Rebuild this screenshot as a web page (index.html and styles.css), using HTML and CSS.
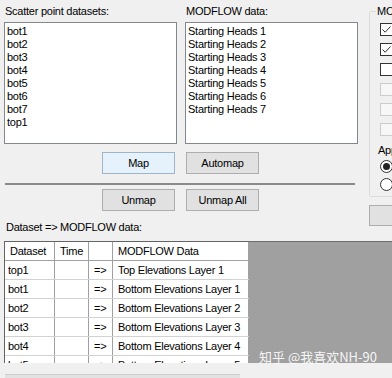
FILE: index.html
```html
<!DOCTYPE html>
<html>
<head>
<meta charset="utf-8">
<link rel="stylesheet" href="styles.css">
</head>
<body>
<div class="win">
  <div class="top">
    <div class="left">
      <div class="lists">
        <div class="col">
          <div class="lbl">Scatter point datasets:</div>
          <div class="listbox">
            <div class="item">bot1</div>
            <div class="item">bot2</div>
            <div class="item">bot3</div>
            <div class="item">bot4</div>
            <div class="item">bot5</div>
            <div class="item">bot6</div>
            <div class="item">bot7</div>
            <div class="item">top1</div>
          </div>
        </div>
        <div class="col">
          <div class="lbl">MODFLOW data:</div>
          <div class="listbox">
            <div class="item">Starting Heads 1</div>
            <div class="item">Starting Heads 2</div>
            <div class="item">Starting Heads 3</div>
            <div class="item">Starting Heads 4</div>
            <div class="item">Starting Heads 5</div>
            <div class="item">Starting Heads 6</div>
            <div class="item">Starting Heads 7</div>
          </div>
        </div>
      </div>
      <div class="btnrow first">
        <button class="btn focus">Map</button>
        <button class="btn">Automap</button>
      </div>
      <div class="sep"></div>
      <div class="btnrow">
        <button class="btn">Unmap</button>
        <button class="btn">Unmap All</button>
      </div>
      <div class="lbl maplbl">Dataset =&gt; MODFLOW data:</div>
    </div>
    <div class="right">
      <div class="group">
        <div class="glabel">MODFLOW options</div>
        <div class="cb on"><svg viewBox="0 0 13 13" width="13" height="13"><path d="M2.5 6.5 L5.2 9.2 L10.5 3.5" fill="none" stroke="#333" stroke-width="1"/></svg></div>
        <div class="cb on"><svg viewBox="0 0 13 13" width="13" height="13"><path d="M2.5 6.5 L5.2 9.2 L10.5 3.5" fill="none" stroke="#333" stroke-width="1"/></svg></div>
        <div class="cb"></div>
        <div class="cb dis"></div>
        <div class="cb dis"></div>
        <div class="cb dis"></div>
        <div class="lbl aplbl">Apply</div>
        <div class="radio on"><span class="dot"></span></div>
        <div class="radio"></div>
      </div>
      <button class="btn rbtn">OK</button>
    </div>
  </div>
  <div class="gridwrap">
    <div class="grid">
      <div class="gtable">
        <div class="row head">
          <div class="c c1">Dataset</div><div class="c c2">Time</div><div class="c c3"></div><div class="c c4">MODFLOW Data</div>
        </div>
        <div class="row">
          <div class="c c1">top1</div><div class="c c2"></div><div class="c c3">=&gt;</div><div class="c c4">Top Elevations Layer 1</div>
        </div>
        <div class="row">
          <div class="c c1">bot1</div><div class="c c2"></div><div class="c c3">=&gt;</div><div class="c c4">Bottom Elevations Layer 1</div>
        </div>
        <div class="row">
          <div class="c c1">bot2</div><div class="c c2"></div><div class="c c3">=&gt;</div><div class="c c4">Bottom Elevations Layer 2</div>
        </div>
        <div class="row">
          <div class="c c1">bot3</div><div class="c c2"></div><div class="c c3">=&gt;</div><div class="c c4">Bottom Elevations Layer 3</div>
        </div>
        <div class="row">
          <div class="c c1">bot4</div><div class="c c2"></div><div class="c c3">=&gt;</div><div class="c c4">Bottom Elevations Layer 4</div>
        </div>
        <div class="row">
          <div class="c c1">bot5</div><div class="c c2"></div><div class="c c3">=&gt;</div><div class="c c4">Bottom Elevations Layer 5</div>
        </div>
      </div>
      <div class="gfill"></div>
    </div>
    <div class="wm">知乎 @我喜欢NH-90</div>
  </div>
  <div class="hbar"></div>
</div>
</body>
</html>
```

FILE: styles.css
```css
* { box-sizing: border-box; }
html, body { margin: 0; padding: 0; }
body {
  background: #f0f0f0;
  width: 392px;
  height: 378px;
  overflow: hidden;
  font-family: "Liberation Sans", Arial, sans-serif;
  font-size: 11px;
  letter-spacing: -0.25px;
  color: #000;
}
.win { width: 392px; height: 378px; overflow: hidden; }
.top { display: flex; height: 241px; }
.left { width: 369px; flex: none; padding: 4px 0 0 4px; }
.lists { display: grid; grid-template-columns: 173px 173px; column-gap: 8px; }
.lbl { line-height: 14px; height: 14px; padding-left: 1px; white-space: nowrap; }
.listbox {
  margin-top: 4px;
  height: 122px;
  background: #fff;
  border: 1px solid #828790;
  padding: 2px 2px;
}
.item { line-height: 13px; height: 13px; white-space: nowrap; }
.btnrow { display: flex; gap: 11px; padding-left: 98px; }
.btnrow.first { margin-top: 8px; }
.btnrow + .sep { margin-top: 9px; }
.btn {
  width: 73px;
  height: 22px;
  border: 1px solid #adadad;
  background: #e1e1e1;
  font: inherit;
  letter-spacing: inherit;
  color: #000;
  padding: 0;
  margin: 0;
}
.btn.focus { background: #e5f1fb; border-color: #9fb4c7; }
.sep { height: 2px; background: #8a8a8a; width: 350px; margin-left: 1px; }
.sep + .btnrow { margin-top: 4px; }
.maplbl { margin-top: 9px; padding-left: 2px; }
.right { flex: none; width: 120px; position: relative; }
.group {
  margin-top: 11px;
  height: 186px;
  border: 1px solid #dcdcdc;
  border-radius: 2px;
  padding: 11px 0 0 10px;
  position: relative;
}
.glabel {
  position: absolute;
  left: 6px;
  top: -7px;
  background: #f0f0f0;
  padding: 0 1px;
  line-height: 13px;
  white-space: nowrap;
}
.cb {
  width: 13px; height: 13px;
  border: 1px solid #333;
  background: #fff;
  margin-bottom: 7px;
  position: relative;
}
.cb svg { position: absolute; left: -1px; top: -1px; }
.cb.dis { border-color: #cccccc; background: #f7f7f7; }
.aplbl { margin-left: -3px; margin-top: 3px; line-height: 14px; }
.radio {
  width: 13px; height: 13px;
  border: 1px solid #333;
  border-radius: 50%;
  background: #fff;
  margin-top: 3px;
  display: flex; align-items: center; justify-content: center;
}
.radio + .radio { margin-top: 5px; }
.dot { width: 7px; height: 7px; border-radius: 50%; background: #222; }
.rbtn { margin-top: 8px; width: 80px; height: 21px; }
.gridwrap { position: relative; height: 122px; padding-left: 4px; }
.grid { display: flex; height: 122px; overflow: hidden; }
.gtable {
  width: 245px;
  flex: none;
  border-left: 1px solid #646464;
  border-top: 1px solid #646464;
  background: #fff;
}
.row { display: flex; height: 19px; border-bottom: 1px solid #d2d2d2; }
.row.head { border-bottom: 1px solid #a0a0a0; background: #fff; }
.c {
  line-height: 18px;
  white-space: nowrap;
  overflow: hidden;
  border-right: 1px solid #a0a0a0;
  padding-left: 3px;
}
.row.head .c1 { padding-left: 5px; }
.row.head .c2 { padding-left: 5px; }
.c1 { width: 50px; }
.c2 { width: 34px; }
.c3 { width: 24px; padding-left: 5px; }
.c4 { width: 136px; padding-left: 5px; }
.gfill { flex: 1; background: #a0a0a0; border-top: 1px solid #6d6d6d; }
.wm {
  position: absolute;
  left: 259px;
  top: 108px;
  color: rgba(255,255,255,0.92);
  font-family: "Noto Sans CJK SC", "Noto Sans", sans-serif;
  font-size: 13px;
  letter-spacing: 0;
  line-height: 16px;
  white-space: nowrap;
}
.hbar {
  margin: 11px 0 0 5px;
  width: 235px;
  height: 4px;
  background: #e2e2e2;
  border-top: 1px solid #cfcfcf;
}
```
